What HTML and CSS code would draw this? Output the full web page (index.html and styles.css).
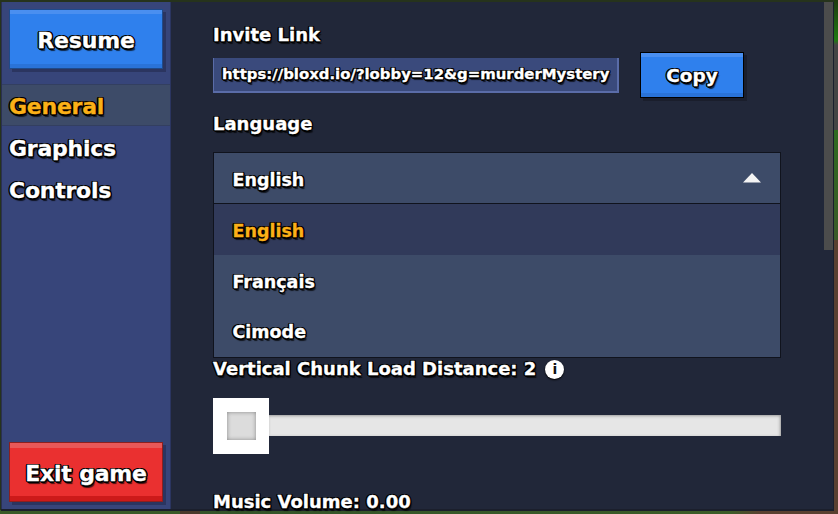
FILE: index.html
```html
<!DOCTYPE html>
<html lang="en">
<head>
<meta charset="utf-8">
<title>Settings</title>
<link rel="stylesheet" href="styles.css">
</head>
<body>
<div class="panel">
  <aside class="sidebar">
    <button class="btn btn-blue btn-side outlined">Resume</button>
    <nav class="nav">
      <div class="nav-item active outlined">General</div>
      <div class="nav-item outlined">Graphics</div>
      <div class="nav-item outlined">Controls</div>
    </nav>
    <button class="btn btn-red btn-side outlined">Exit game</button>
  </aside>
  <main class="content">
    <div class="label outlined label-first">Invite Link</div>
    <div class="invite-row">
      <div class="invite-input outlined">https://bloxd.io/?lobby=12&amp;g=murderMystery</div>
      <button class="btn btn-blue btn-copy outlined">Copy</button>
    </div>
    <div class="label outlined label-lang">Language</div>
    <div class="select">
      <div class="select-head">
        <span class="outlined">English</span>
        <svg class="caret" width="20" height="10" viewBox="0 0 20 10"><polygon points="10,0 19,9.5 1,9.5" fill="#f4f4f4"/></svg>
      </div>
      <div class="select-menu">
        <div class="option selected outlined">English</div>
        <div class="option outlined">Français</div>
        <div class="option outlined">Cimode</div>
      </div>
    </div>
    <div class="label outlined label-chunk">
      <span>Vertical Chunk Load Distance: 2</span>
      <span class="info">i</span>
    </div>
    <div class="slider">
      <div class="thumb"><div class="thumb-inner"></div></div>
      <div class="track"></div>
    </div>
    <div class="label outlined label-music">Music Volume: 0.00</div>
    <div class="scrollbar"></div>
  </main>
</div>
</body>
</html>
```
FILE: styles.css
```css
* { box-sizing: border-box; }
html, body { margin: 0; height: 100%; }
body {
  width: 838px;
  height: 514px;
  overflow: hidden;
  padding: 2px 4px 3px 1px;
  font-family: "DejaVu Sans", sans-serif;
  font-weight: bold;
  color: #fff;
  background:
    linear-gradient(to right, #3a5a28 0, #3a5a28 180px, #4a3a2c 180px, #4a3a2c 200px, #34552a 200px, #3c5c28 730px, #5a4030 760px, #5a4030 838px) bottom / 838px 4px no-repeat,
    linear-gradient(to bottom, #1f3a10 0, #1f7a10 40px, #444 45px, #444 130px, #2f6a20 130px, #3a5a28 240px, #5a4030 240px) right / 4px 514px no-repeat,
    #26331c;
}
.outlined {
  -webkit-text-stroke: 0.3px currentColor;
  text-shadow:
    -1.5px 0 0 #000, 1.5px 0 0 #000, 0 -1.5px 0 #000, 0 1.5px 0 #000,
    -1.2px -1.2px 0 #000, 1.2px -1.2px 0 #000, -1.2px 1.2px 0 #000, 1.2px 1.2px 0 #000,
    1.5px 3px 1px rgba(0,0,0,.7);
}
.panel {
  display: flex;
  height: 509px;
  background: #212739;
  border-right: 1px solid #1a1f2d;
  border-bottom: 2px solid #1b1f2c;
}
.sidebar {
  width: 170px;
  flex: none;
  display: flex;
  flex-direction: column;
  background: #37457a;
  border-left: 1px solid #2a3052;
  border-right: 1px solid #2b3560;
  padding-top: 7px;
}
.btn {
  display: block;
  padding: 2px 0 0;
  color: #fff;
  font: bold 22px "DejaVu Sans", sans-serif;
  letter-spacing: -0.2px;
  background: #2f80ed;
  cursor: pointer;
}
.btn-blue { border: 1px solid #1f4a8a; box-shadow: inset 0 4px 0 #4a8ff0, inset 0 -4px 0 #2a73d8, 3px 3px 0 #2b3560; }
.btn-red {
  background: #ea3030;
  border: 1px solid #8a2020;
  box-shadow: inset 0 5px 0 #e85858, inset 0 -5px 0 #cc1a1a, 3px 3px 0 #2b3560;
  margin-top: auto;
  margin-bottom: 7px;
}
.btn-side { width: 154px; height: 60px; margin-left: 7px; flex: none; }
.nav { margin-top: 15px; }
.nav-item {
  height: 42px;
  line-height: 45px;
  padding-left: 7px;
  font-size: 22px;
  letter-spacing: -0.25px;
}
.nav-item.active {
  color: #fbb017;
  background: #3d4b68;
  box-shadow: inset 0 1px 0 #333f60, inset 0 -1px 0 #333f60;
}
.content {
  flex: 1;
  position: relative;
  padding-left: 42px;
  min-width: 0;
}
.label { font-size: 18px; line-height: 20px; display: flex; align-items: center; }
.label-first { margin-top: 23px; }
.label-lang { margin-top: 16px; }
.invite-row { display: flex; align-items: center; margin-top: 7px; }
.invite-input {
  width: 406px;
  height: 35px;
  line-height: 33px;
  padding-left: 9px;
  font-size: 14.9px;
  white-space: nowrap;
  background: #3a4a7c;
  border-right: 2px solid #5a6ca8;
  border-bottom: 2px solid #5a6ca8;
  box-shadow: inset 1px 0 0 #5a6ca8;
}
.btn-copy {
  width: 104px;
  height: 46px;
  margin-left: 21px;
  padding: 0;
  font-size: 18.5px;
  letter-spacing: 0;
  border: 1px solid #000;
  box-shadow: inset 0 4px 0 #4a8ff0, inset 0 -4px 0 #2a73d8, 3px 3px 0 #1a1e2c;
}
.select { position: relative; width: 568px; margin-top: 18px; }
.select-head {
  display: flex;
  align-items: center;
  justify-content: space-between;
  height: 52px;
  padding: 0 18px 0 18.5px;
  font-size: 17.5px;
  background: #3d4b68;
  border: 1px solid #10131d;
}
.select-head span { position: relative; top: 1.5px; }
.select-menu {
  position: absolute;
  left: 0;
  right: 0;
  top: 51px;
  height: 155px;
  z-index: 2;
  display: flex;
  flex-direction: column;
  background: #3d4b68;
  border: 1px solid #10131d;
}
.option {
  height: 50px;
  line-height: 54px;
  padding-left: 18.5px;
  font-size: 17.5px;
}
.option.selected { color: #fbb017; background: #313a5a; height: 51px; }
.label-chunk { margin-top: 155px; }
.info {
  display: inline-block;
  width: 19px;
  height: 19px;
  margin-left: 9px;
  border-radius: 50%;
  background: #fff;
  color: #111;
  font-size: 14px;
  line-height: 19px;
  text-align: center;
  text-shadow: none;
  -webkit-text-stroke: 0;
  box-shadow: 0 1px 2px #000;
}
.slider { display: flex; margin-top: 19px; width: 568px; }
.thumb {
  width: 56px;
  height: 56px;
  flex: none;
  padding: 14px;
  background: #fff;
}
.thumb-inner {
  width: 29px;
  height: 28px;
  background: #dcdcdc;
  box-shadow: inset 0 0 4px #888;
}
.track {
  flex: 1;
  height: 21px;
  margin-top: 17px;
  background: #e6e6e6;
  box-shadow: inset -1px 1px 3px #999;
}
.label-music { margin-top: 39px; line-height: 17px; }
.scrollbar {
  position: absolute;
  right: 0;
  top: 0;
  width: 9px;
  height: 248px;
  background: #4c4c4c;
}
```
